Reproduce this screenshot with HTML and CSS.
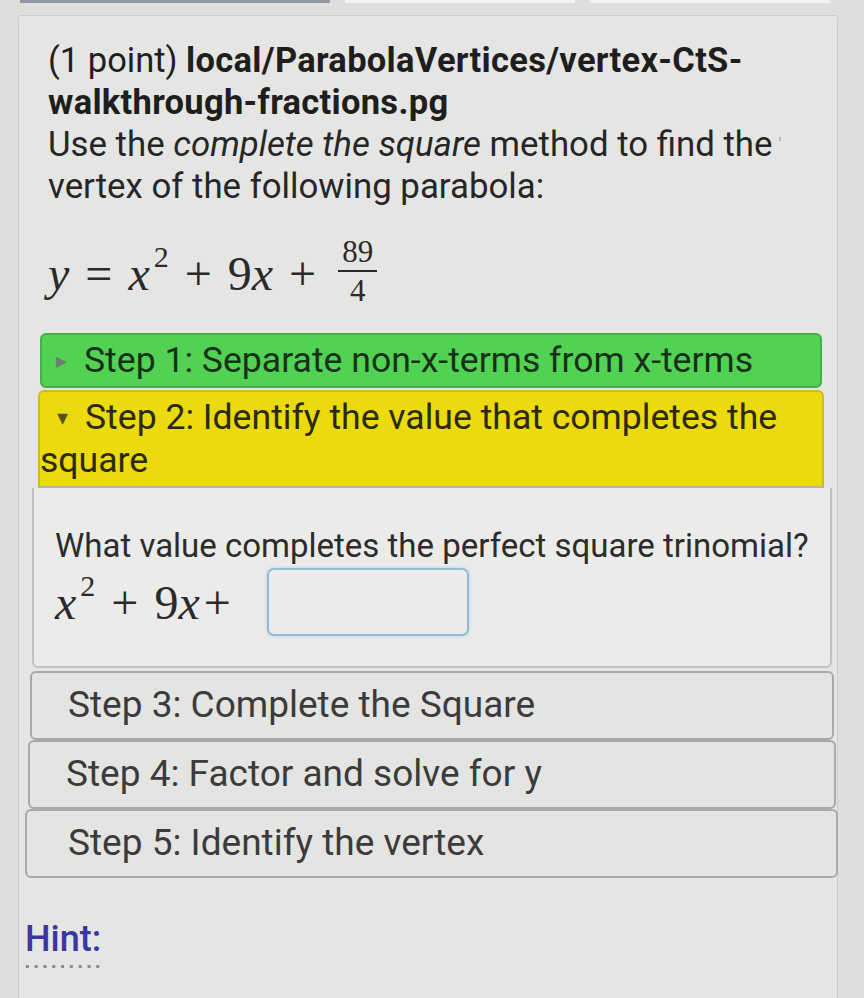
FILE: index.html
```
<!DOCTYPE html>
<html>
<head>
<meta charset="utf-8">
<link rel="stylesheet" href="styles.css">
</head>
<body>
<div class="topbar">
  <div class="tb tb1"></div>
  <div class="tb tb2"></div>
  <div class="tb tb3"></div>
</div>
<div class="card">
  <div class="head"><span class="pts">(1 point)</span> <b>local/ParabolaVertices/vertex-CtS-walkthrough-fractions.pg</b></div>
  <p class="intro">Use the <i>complete the square</i> method to find the<span class="tick">'</span> vertex of the following parabola:</p>
  <div class="eq">
    <span class="mi">y</span><span class="mo">=</span><span class="mi">x</span><sup class="sup">2</sup><span class="mo">+</span><span class="mn">9</span><span class="mi">x</span><span class="mo">+</span><span class="frac"><span class="num">89</span><span class="den">4</span></span>
  </div>
  <div class="steps">
    <div class="step s1"><span class="tri tri-r">&#9656;</span>Step 1: Separate non-x-terms from x-terms</div>
    <div class="step s2"><span class="tri tri-d">&#9662;</span>Step 2: Identify the value that completes the square</div>
    <div class="body">
      <div class="q">What value completes the perfect square trinomial?</div>
      <div class="ans">
        <span class="mi">x</span><sup class="sup">2</sup><span class="mo">+</span><span class="mn">9</span><span class="mi">x</span><span class="mo tight">+</span>
        <span class="box"></span>
      </div>
    </div>
    <div class="step sg s3">Step 3: Complete the Square</div>
    <div class="step sg s4">Step 4: Factor and solve for y</div>
    <div class="step sg s5">Step 5: Identify the vertex</div>
  </div>
  <div class="hint">Hint:</div>
</div>
</body>
</html>
```
FILE: styles.css
```
html, body {
  margin: 0;
  padding: 0;
}
body {
  background: #dedfdc;
  font-family: Roboto, "Noto Sans", sans-serif;
  color: #222;
  height: 998px;
  overflow: hidden;
}
.topbar {
  display: flex;
  gap: 15px;
  padding: 0 34px 0 20px;
  height: 3px;
}
.tb { height: 3px; }
.tb1 { width: 310px; background: #8f96a4; }
.tb2 { width: 230px; background: #f2f3f4; }
.tb3 { flex: 1; background: #f2f3f4; }

.card {
  margin: 12px 26px 0 18px;
  border: 1px solid #cdcdcb;
  border-radius: 3px;
  background: #e5e6e3;
  padding: 23px 0 0 0;
  height: 1100px;
}
.head {
  padding: 0 20px 0 29px;
  font-size: 34.5px;
  line-height: 42px;
  color: #1e1e1e;
}
.head b { font-weight: 700; letter-spacing: 0.3px; }
.intro {
  margin: 0;
  padding: 0 20px 0 29px;
  font-size: 34.8px;
  line-height: 42px;
  color: #262626;
}
.intro i { font-style: italic; }
.tick { color: #9a9a9a; font-size: 16px; vertical-align: top; margin-left: 6px; }

.eq {
  margin-top: 26px;
  padding-left: 29px;
  height: 80px;
  font-family: "Liberation Serif", "DejaVu Serif", serif;
  font-size: 48px;
  color: #2a2a2a;
  display: flex;
  align-items: center;
}
.mi { font-style: italic; }
.mn { font-style: normal; }
.mo { margin: 0 16px; }
.sup { font-size: 30px; position: relative; top: -16px; margin-left: 4px; }
.frac {
  display: inline-flex;
  flex-direction: column;
  align-items: center;
  font-size: 31px;
  line-height: 30px;
  margin-left: 6px;
  margin-top: -4px;
}
.num { border-bottom: 2px solid #2a2a2a; padding: 0 4px 3px; }
.den { padding-top: 4px; }

.steps {
  margin: 20px 0 0 6px;
  width: 813px;
  display: flex;
  flex-direction: column;
}
.step {
  font-size: 35.6px;
  line-height: 42px;
  border-radius: 6px;
  box-sizing: border-box;
}
.s1 {
  background: #52d252;
  border: 2px solid #46ae48;
  color: #17301a;
  height: 55px;
  padding: 4px 10px 0 14px;
  margin: 0 16px 2px 15px;
}
.s2 {
  background: #ebda0e;
  border: 2px solid #c9bc26;
  border-bottom: 2px solid #b9b59a;
  color: #2b2a0c;
  height: 98px;
  padding: 4px 10px 0 0;
  margin: 0 14px 0 13px;
  border-radius: 6px 6px 0 0;
  text-indent: 17px;
}
.tri {
  display: inline-block;
  width: 28px;
  font-size: 22px;
  text-indent: 0;
  vertical-align: 4px;
}
.tri-r { color: #6b806a; }
.tri-d { color: #57501c; }

.body {
  margin: 0 6px 0 7px;
  background: #ebebe9;
  border: 2px solid #c2c2c0;
  border-top: none;
  border-radius: 0 0 6px 6px;
  height: 180px;
  box-sizing: border-box;
  padding: 37px 10px 0 21px;
}
.q {
  font-size: 33px;
  line-height: 42px;
  color: #2c2c2c;
}
.ans {
  display: flex;
  align-items: center;
  font-family: "Liberation Serif", "DejaVu Serif", serif;
  font-size: 48px;
  color: #2a2a2a;
  margin-top: 1px;
}
.ans .mo { margin: 0 16px; }
.ans .mo.tight { margin: 0 0 0 4px; }
.box {
  display: inline-block;
  width: 202px;
  height: 68px;
  box-sizing: border-box;
  margin-left: 36px;
  border: 2px solid #8fbcd8;
  border-radius: 7px;
  background: #ececea;
  box-shadow: 0 0 3px rgba(120, 170, 210, 0.5);
}
.sg {
  background: #e4e4e2;
  border: 2px solid #a9a9a7;
  color: #3b3b3b;
  height: 69px;
  font-size: 37px;
  padding: 11px 10px 0 36px;
}
.s3 { margin: 3px 4px 0 5px; }
.s4 { margin: 0 2px 0 3px; }
.s5 { margin: 0; padding-left: 41px; }
.hint {
  margin: 41px 0 0 6px;
  font-size: 36px;
  font-weight: 500;
  color: #3a36a6;
  display: inline-block;
  line-height: 40px;
  padding-bottom: 10px;
  background-image: radial-gradient(circle, #8a8a8a 1.5px, transparent 2px);
  background-size: 8.8px 5px;
  background-position: -2px bottom;
  background-repeat: repeat-x;
  padding-right: 1px;
}
```
